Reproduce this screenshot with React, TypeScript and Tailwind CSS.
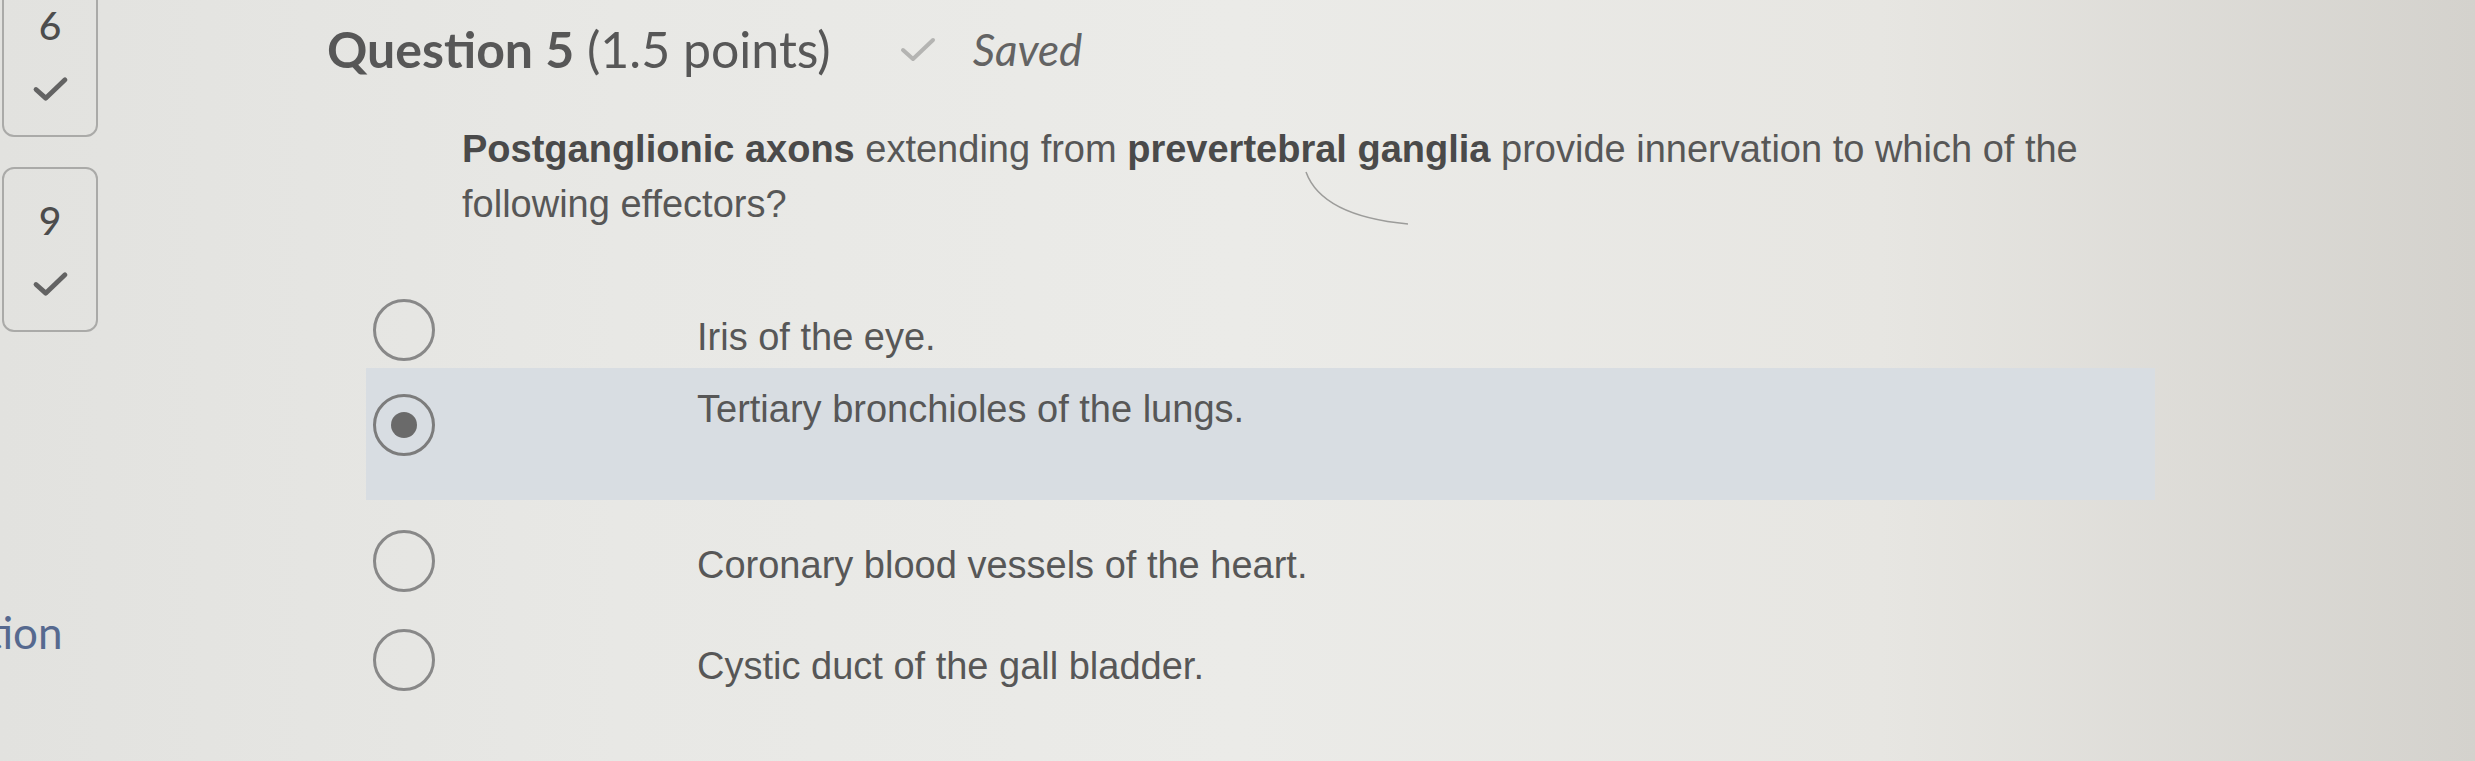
import React from "react";

const Check = ({ className, w = 5 }: { className?: string; w?: number }) => (
  <svg viewBox="0 0 38 28" className={className} fill="none">
    <path d="M4 15 L14 24 L34 5" stroke="currentColor" strokeWidth={w} strokeLinecap="round" strokeLinejoin="round" />
  </svg>
);

const Radio = ({ selected }: { selected?: boolean }) => (
  <div className={"w-[62px] h-[62px] rounded-full border-[3px] flex items-center justify-center shrink-0 " + (selected ? "border-[#7c7c7c]" : "border-[#888888]")}>
    {selected && <div className="w-[26px] h-[26px] rounded-full bg-[#6a6a6a]" />}
  </div>
);

export default function App() {
  const answerFont = { fontFamily: '"Liberation Sans", Arial, sans-serif' };
  return (
    <div className="relative w-[2475px] h-[761px] overflow-hidden flex bg-[linear-gradient(to_right,#e2e2df_0%,#e8e8e5_25%,#ebebe8_50%,#e7e6e2_76%,#d4d2cd_100%)]" style={{ fontFamily: 'Lato, "Liberation Sans", sans-serif' }}>
      {/* left navigation column */}
      <div className="w-[98px] shrink-0 pl-[2px] flex flex-col -mt-[28px]">
        <div className="w-[96px] h-[165px] rounded-[12px] border-2 border-[#aaaaa8] flex flex-col items-center pt-[29px]">
          <span className="text-[39px] leading-[44px] font-medium text-[#4d4d4d]">6</span>
          <Check className="w-[37px] h-[27px] mt-[28px] text-[#636363]" />
        </div>
        <div className="w-[96px] h-[165px] mt-[30px] rounded-[12px] border-2 border-[#aaaaa8] flex flex-col items-center pt-[29px]">
          <span className="text-[39px] leading-[44px] font-medium text-[#4d4d4d]">9</span>
          <Check className="w-[37px] h-[27px] mt-[28px] text-[#636363]" />
        </div>
        <div className="mt-[274px] -ml-[16px] text-[44px] leading-[52px] text-[#56698f] whitespace-nowrap">tion</div>
      </div>

      {/* main column */}
      <div className="ml-[229px] flex flex-col pt-[19px]">
        <div className="flex items-center h-[60px] whitespace-nowrap">
          <span className="text-[50px] leading-[60px] text-[#575757]">
            <span className="font-bold">Question 5</span> (1.5 points)
          </span>
          <Check className="w-[38px] h-[28px] ml-[68px] text-[#b4b4b2]" w={4} />
          <span className="ml-[36px] text-[44px] italic text-[#636363]">Saved</span>
        </div>

        <div className="ml-[135px] mt-[43px] text-[38px] leading-[55px] text-[#575757] whitespace-nowrap" style={answerFont}>
          <span className="font-bold text-[#4a4a4a]">Postganglionic axons</span> extending from{" "}
          <span className="font-bold text-[#4a4a4a]">prevertebral ganglia</span> provide innervation to which of the
          <br />
          following effectors?
        </div>

        <div className="ml-[39px] mt-[43px] w-[1789px] flex flex-col text-[38px] leading-[55px] text-[#575757]" style={answerFont}>
          <div className="h-[93px] flex items-start pl-[7px]">
            <div className="mt-[24px]"><Radio /></div>
            <div className="ml-[262px] mt-[35px]">Iris of the eye.</div>
          </div>
          <div className="h-[132px] flex items-start pl-[7px] bg-[#d8dde2]">
            <div className="mt-[26px]"><Radio selected /></div>
            <div className="ml-[262px] mt-[14px]">Tertiary bronchioles of the lungs.</div>
          </div>
          <div className="h-[104px] flex items-start pl-[7px]">
            <div className="mt-[30px]"><Radio /></div>
            <div className="ml-[262px] mt-[38px]">Coronary blood vessels of the heart.</div>
          </div>
          <div className="h-[104px] flex items-start pl-[7px]">
            <div className="mt-[25px]"><Radio /></div>
            <div className="ml-[262px] mt-[35px]">Cystic duct of the gall bladder.</div>
          </div>
        </div>
      </div>

      {/* hair / scratch on the screen */}
      <svg className="absolute left-0 top-0 pointer-events-none" width="2475" height="761">
        <path d="M1306 172 Q1322 216 1408 224" stroke="#9c9c9a" strokeWidth="1.5" fill="none" />
      </svg>
    </div>
  );
}
